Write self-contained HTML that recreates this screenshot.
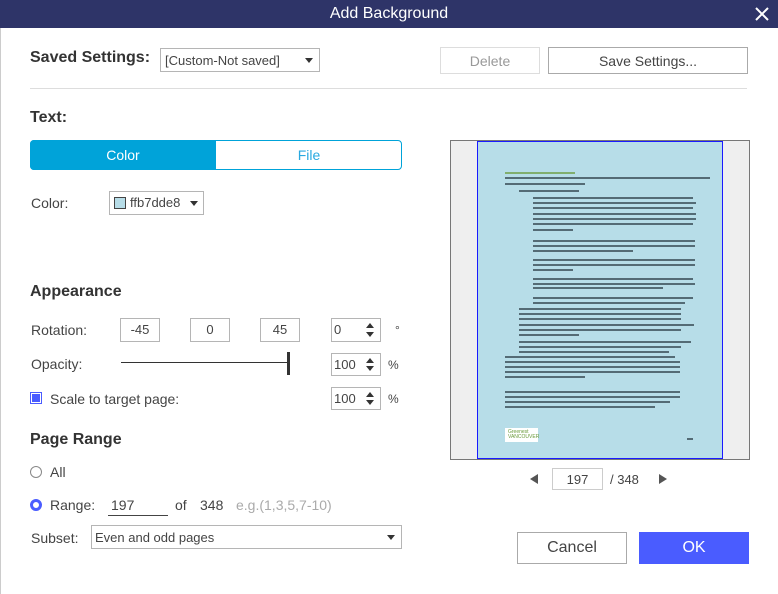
<!DOCTYPE html>
<html><head><meta charset="utf-8"><style>
*{margin:0;padding:0;box-sizing:border-box}
body{width:778px;height:594px;background:#fff;font-family:"Liberation Sans",sans-serif;color:#444;position:relative;overflow:hidden;font-size:14px}
.a{position:absolute}
.t{position:absolute;white-space:nowrap;line-height:1}
.box{position:absolute;border:1px solid #b5b5b5;background:#fff}
.h{font-weight:bold;font-size:16px;color:#333}
.tri{position:absolute;width:0;height:0;border-left:4px solid transparent;border-right:4px solid transparent;border-top:5px solid #333}
.ln{position:absolute;height:2px;background:#2a3a45;opacity:.7}
.spin .up,.spin .dn{position:absolute;right:6px;width:0;height:0;border-left:4px solid transparent;border-right:4px solid transparent}
.spin .up{top:4px;border-bottom:5px solid #333}
.spin .dn{bottom:4px;border-top:5px solid #333}
</style></head><body>
<div class="a" style="left:0;top:0;width:778px;height:28px;background:#2e3468"></div>
<div class="t" style="left:0;width:778px;text-align:center;top:6px;color:#fff;font-size:16px">Add Background</div>
<svg class="a" style="left:755px;top:7px" width="14" height="14"><path d="M1 1L13 13M13 1L1 13" stroke="#fff" stroke-width="2"/></svg>
<div class="a" style="left:0;top:28px;width:1px;height:566px;background:#ccc"></div>

<div class="t h" style="left:30px;top:50px">Saved Settings:</div>
<div class="box" style="left:160px;top:48px;width:160px;height:24px"></div>
<div class="t" style="left:165px;top:54px;font-size:13px">[Custom-Not saved]</div>
<div class="tri" style="left:305px;top:58px"></div>
<div class="box" style="left:440px;top:47px;width:100px;height:27px;border-color:#ddd"></div>
<div class="t" style="left:440px;width:100px;text-align:center;top:54px;color:#999">Delete</div>
<div class="box" style="left:548px;top:47px;width:200px;height:27px;border-color:#aaa"></div>
<div class="t" style="left:548px;width:200px;text-align:center;top:54px;color:#444">Save Settings...</div>
<div class="a" style="left:30px;top:88px;width:717px;height:1px;background:#ddd"></div>

<div class="t h" style="left:30px;top:110px">Text:</div>
<div class="a" style="left:30px;top:140px;width:372px;height:30px;border:1px solid #00a3d9;border-radius:4px;background:#fff"></div>
<div class="a" style="left:30px;top:140px;width:186px;height:30px;background:#00a3d9;border-radius:4px 0 0 4px"></div>
<div class="t" style="left:30px;width:186px;text-align:center;top:148px;color:#fff">Color</div>
<div class="t" style="left:216px;width:186px;text-align:center;top:148px;color:#29a9e0">File</div>

<div class="t" style="left:31px;top:196px">Color:</div>
<div class="box" style="left:109px;top:191px;width:95px;height:24px"></div>
<div class="a" style="left:114px;top:197px;width:12px;height:12px;background:#b7dde8;border:1px solid #444"></div>
<div class="t" style="left:130px;top:196px;font-size:13px">ffb7dde8</div>
<div class="tri" style="left:190px;top:201px"></div>

<div class="t h" style="left:30px;top:284px">Appearance</div>
<div class="t" style="left:31px;top:323px">Rotation:</div>
<div class="box" style="left:120px;top:318px;width:40px;height:24px"></div><div class="t" style="left:120px;width:40px;text-align:center;top:323px;font-size:13px">-45</div>
<div class="box" style="left:190px;top:318px;width:40px;height:24px"></div><div class="t" style="left:190px;width:40px;text-align:center;top:323px;font-size:13px">0</div>
<div class="box" style="left:260px;top:318px;width:40px;height:24px"></div><div class="t" style="left:260px;width:40px;text-align:center;top:323px;font-size:13px">45</div>
<div class="box spin" style="left:331px;top:318px;width:50px;height:24px"><span class="up"></span><span class="dn"></span></div><div class="t" style="left:334px;top:323px;font-size:13px">0</div>
<div class="t" style="left:395px;top:324px;font-size:12px">°</div>

<div class="t" style="left:31px;top:357px">Opacity:</div>
<div class="a" style="left:121px;top:362px;width:168px;height:1px;background:#333"></div>
<div class="a" style="left:287px;top:352px;width:3px;height:23px;background:#333"></div>
<div class="box spin" style="left:331px;top:353px;width:50px;height:23px"><span class="up"></span><span class="dn"></span></div><div class="t" style="left:334px;top:358px;font-size:13px">100</div>
<div class="t" style="left:388px;top:359px;font-size:12px">%</div>

<div class="a" style="left:30px;top:392px;width:12px;height:12px;border:1px solid #4a5cff;background:#fff"></div>
<div class="a" style="left:32px;top:394px;width:8px;height:8px;background:#4a5cff"></div>
<div class="t" style="left:50px;top:392px">Scale to target page:</div>
<div class="box spin" style="left:331px;top:387px;width:50px;height:23px"><span class="up"></span><span class="dn"></span></div><div class="t" style="left:334px;top:392px;font-size:13px">100</div>
<div class="t" style="left:388px;top:393px;font-size:12px">%</div>

<div class="t h" style="left:30px;top:432px">Page Range</div>
<div class="a" style="left:30px;top:466px;width:12px;height:12px;border:1px solid #888;border-radius:50%"></div>
<div class="t" style="left:50px;top:465px">All</div>
<div class="a" style="left:30px;top:499px;width:12px;height:12px;border:3px solid #4a5cff;border-radius:50%"></div>
<div class="t" style="left:50px;top:498px">Range:</div>
<div class="a" style="left:108px;top:515px;width:60px;height:1px;background:#444"></div>
<div class="t" style="left:111px;top:498px">197</div>
<div class="t" style="left:175px;top:498px">of</div>
<div class="t" style="left:200px;top:498px">348</div>
<div class="t" style="left:236px;top:498px;color:#aaa">e.g.(1,3,5,7-10)</div>

<div class="t" style="left:31px;top:531px">Subset:</div>
<div class="box" style="left:91px;top:525px;width:311px;height:24px"></div>
<div class="t" style="left:95px;top:531px;font-size:13px">Even and odd pages</div>
<div class="tri" style="left:387px;top:535px"></div>

<div class="a" style="left:450px;top:140px;width:300px;height:320px;background:#efefef;border:1px solid #777"></div>
<div class="a" style="left:477px;top:141px;width:246px;height:318px;background:#b7dde8;border:1px solid #1a1aff"></div>
<div class="ln" style="left:505px;top:172px;width:70px;background:#6a9a3a"></div>
<div id="lines"></div>
<div class="a" style="left:505px;top:428px;width:33px;height:14px;background:#fff"></div>
<div class="t" style="left:508px;top:430px;font-size:5px;color:#6a9a3a">Greenest<br>VANCOUVER</div>
<div class="ln" style="left:687px;top:438px;width:6px"></div>

<div class="tri" style="left:530px;top:474px;border:none;border-top:5px solid transparent;border-bottom:5px solid transparent;border-right:8px solid #555"></div>
<div class="box" style="left:552px;top:468px;width:51px;height:22px;border-color:#ccc"></div>
<div class="t" style="left:552px;width:51px;text-align:center;top:473px;font-size:13px">197</div>
<div class="t" style="left:610px;top:473px;font-size:13px">/ 348</div>
<div class="tri" style="left:659px;top:474px;border:none;border-top:5px solid transparent;border-bottom:5px solid transparent;border-left:8px solid #555"></div>

<div class="box" style="left:517px;top:532px;width:110px;height:32px;border-color:#aaa"></div>
<div class="t" style="left:517px;width:110px;text-align:center;top:540px;font-size:16px">Cancel</div>
<div class="a" style="left:639px;top:532px;width:110px;height:32px;background:#4a5cff"></div>
<div class="t" style="left:639px;width:110px;text-align:center;top:540px;font-size:16px;color:#fff">OK</div>

<script>
var L=[[505,177,205],[505,183,80],[519,190,60],[533,197,160],[533,202,163],[533,207,160],[533,213,163],[533,218,163],[533,223,160],[533,229,40],[533,240,162],[533,245,162],[533,250,100],[533,259,162],[533,264,162],[533,269,40],[533,278,160],[533,283,162],[533,287,130],[533,297,160],[533,302,152],[519,308,162],[519,313,162],[519,318,162],[519,324,175],[519,329,162],[519,334,60],[519,341,172],[519,346,162],[519,351,150],[505,356,170],[505,361,175],[505,366,175],[505,371,175],[505,376,80],[505,391,175],[505,396,175],[505,401,165],[505,406,150]];
var h='';L.forEach(function(a){h+='<div class="ln" style="left:'+a[0]+'px;top:'+a[1]+'px;width:'+a[2]+'px"></div>';});
document.getElementById('lines').innerHTML=h;
</script>
</body></html>
